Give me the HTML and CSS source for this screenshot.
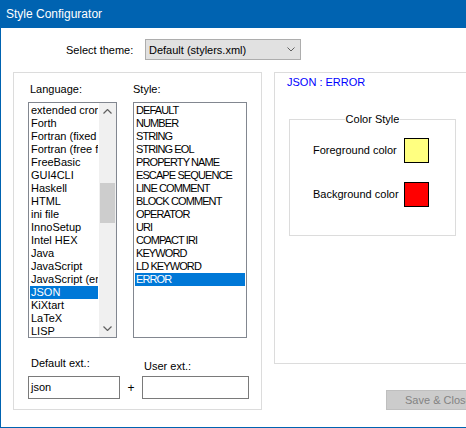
FILE: index.html
```html
<!DOCTYPE html>
<html>
<head>
<meta charset="utf-8">
<link rel="stylesheet" href="styles.css">
</head>
<body>
<div class="window">
  <div class="titlebar">Style Configurator</div>
  <div class="theme-row">
    <span class="theme-label">Select theme:</span>
    <div class="combo">
      <span>Default (stylers.xml)</span>
      <svg class="combo-arrow" width="8" height="5" viewBox="0 0 8 5"><polyline points="0.5,0.5 4,4 7.5,0.5" fill="none" stroke="#606060" stroke-width="1"/></svg>
    </div>
  </div>
  <div class="main">
    <div class="group-left">
      <div class="lists">
        <div class="col lang-col">
          <div class="lbl lbl-lang">Language:</div>
          <div class="listbox lang">
            <div class="items">
              <div class="item">extended crontab</div>
              <div class="item">Forth</div>
              <div class="item">Fortran (fixed form)</div>
              <div class="item">Fortran (free form)</div>
              <div class="item">FreeBasic</div>
              <div class="item">GUI4CLI</div>
              <div class="item">Haskell</div>
              <div class="item">HTML</div>
              <div class="item">ini file</div>
              <div class="item">InnoSetup</div>
              <div class="item">Intel HEX</div>
              <div class="item">Java</div>
              <div class="item">JavaScript</div>
              <div class="item">JavaScript (embedded)</div>
              <div class="item sel">JSON</div>
              <div class="item">KiXtart</div>
              <div class="item">LaTeX</div>
              <div class="item">LISP</div>
            </div>
            <div class="scrollbar">
              <div class="sb-btn"><svg width="9" height="5" viewBox="0 0 9 5"><polyline points="0.5,4.5 4.5,0.5 8.5,4.5" fill="none" stroke="#606060" stroke-width="1.2"/></svg></div>
              <div class="sb-thumb"></div>
              <div class="sb-btn sb-down"><svg width="9" height="5" viewBox="0 0 9 5"><polyline points="0.5,0.5 4.5,4.5 8.5,0.5" fill="none" stroke="#606060" stroke-width="1.2"/></svg></div>
            </div>
          </div>
        </div>
        <div class="col style-col">
          <div class="lbl">Style:</div>
          <div class="listbox stylelist">
            <div class="items">
              <div class="item">DEFAULT</div>
              <div class="item">NUMBER</div>
              <div class="item">STRING</div>
              <div class="item">STRING EOL</div>
              <div class="item">PROPERTY NAME</div>
              <div class="item">ESCAPE SEQUENCE</div>
              <div class="item">LINE COMMENT</div>
              <div class="item">BLOCK COMMENT</div>
              <div class="item">OPERATOR</div>
              <div class="item">URI</div>
              <div class="item">COMPACT IRI</div>
              <div class="item">KEYWORD</div>
              <div class="item">LD KEYWORD</div>
              <div class="item sel">ERROR</div>
            </div>
          </div>
        </div>
      </div>
      <div class="ext-row">
        <div class="ext-col ext-default">
          <div class="ext-lbl lbl-default">Default ext.:</div>
          <div class="textbox">json</div>
        </div>
        <div class="plus">+</div>
        <div class="ext-col ext-user">
          <div class="ext-lbl lbl-user">User ext.:</div>
          <div class="textbox"></div>
        </div>
      </div>
    </div>
    <div class="right-col">
      <div class="panel">
        <div class="cur">JSON : ERROR</div>
        <fieldset class="colorstyle">
          <legend>Color Style</legend>
          <div class="color-grid">
            <span class="clabel">Foreground color</span>
            <div class="swatch fg"></div>
            <span class="clabel">Background color</span>
            <div class="swatch bg"></div>
          </div>
        </fieldset>
      </div>
      <button class="save">Save &amp; Close</button>
    </div>
  </div>
</div>
</body>
</html>
```
FILE: styles.css
```css
html, body {
  margin: 0;
  padding: 0;
}
body {
  width: 466px;
  height: 428px;
  overflow: hidden;
  background: #ffffff;
  font-family: "Liberation Sans", Arial, sans-serif;
  font-size: 11px;
  color: #000000;
}
.window {
  width: 560px;
  height: 428px;
  box-sizing: border-box;
  border-left: 1px solid #0063b1;
  border-bottom: 1px solid #0063b1;
  background: #ffffff;
}
.titlebar {
  height: 28px;
  line-height: 28px;
  background: #0063b1;
  color: #ffffff;
  font-size: 12px;
  padding-left: 5px;
  margin-left: -1px;
  padding-left: 6px;
}
.theme-row {
  display: flex;
  align-items: center;
  margin-top: 11px;
  padding-left: 65px;
  height: 21px;
}
.theme-label {
  width: 79px;
  flex: none;
}
.combo {
  width: 156px;
  height: 21px;
  box-sizing: border-box;
  border: 1px solid #adadad;
  background: #e1e1e1;
  display: flex;
  align-items: center;
  justify-content: space-between;
  padding: 0 5px 0 3px;
}
.combo-arrow {
  display: block;
}
.main {
  display: flex;
  align-items: flex-start;
  margin-top: 12px;
  padding-left: 12px;
}
.group-left {
  width: 249px;
  height: 338px;
  box-sizing: border-box;
  border: 1px solid #dcdcdc;
  padding: 10px 0 0 14px;
  flex: none;
}
.lists {
  display: flex;
  gap: 16px;
}
.lbl {
  line-height: 13px;
  height: 13px;
  margin-bottom: 6px;
}
.lbl-lang {
  padding-left: 2px;
}
.listbox {
  height: 236px;
  box-sizing: border-box;
  border: 1px solid #828790;
  background: #ffffff;
  overflow: hidden;
  display: flex;
}
.listbox .items {
  padding: 1px;
  overflow: hidden;
  flex: 1;
  min-width: 0;
}
.item {
  height: 13px;
  line-height: 13px;
  padding-left: 1px;
  white-space: nowrap;
  overflow: hidden;
}
.item.sel {
  background: #0078d7;
  color: #ffffff;
}
.lang {
  width: 89px;
}
.stylelist {
  width: 114px;
}
.stylelist .item {
  letter-spacing: -0.9px;
}
.scrollbar {
  width: 17px;
  flex: none;
  background: #f0f0f0;
  display: flex;
  flex-direction: column;
}
.sb-btn {
  height: 17px;
  display: flex;
  align-items: center;
  justify-content: center;
  flex: none;
}
.sb-btn svg {
  display: block;
}
.sb-thumb {
  margin: 63px 1px 0 1px;
  height: 40px;
  background: #cdcdcd;
  flex: none;
}
.sb-down {
  margin-top: auto;
}
.ext-row {
  display: flex;
  align-items: flex-end;
  margin-top: 19px;
}
.ext-col {
  display: flex;
  flex-direction: column;
}
.ext-default {
  width: 92px;
}
.ext-user {
  width: 107px;
}
.ext-lbl {
  line-height: 13px;
  height: 13px;
}
.lbl-default {
  padding-left: 3px;
  margin-bottom: 6px;
}
.lbl-user {
  padding-left: 2px;
  margin-bottom: 3px;
}
.textbox {
  height: 23px;
  box-sizing: border-box;
  border: 1px solid #7a7a7a;
  background: #ffffff;
  line-height: 20px;
  padding-left: 2px;
}
.plus {
  width: 22px;
  height: 23px;
  line-height: 24px;
  text-align: center;
  font-size: 12px;
}
.right-col {
  margin-left: 12px;
  display: flex;
  flex-direction: column;
  flex: none;
}
.panel {
  width: 240px;
  height: 292px;
  box-sizing: border-box;
  border: 1px solid #dcdcdc;
  padding: 3px 0 0 12px;
}
.cur {
  color: #0000ff;
  line-height: 13px;
  height: 13px;
}
.colorstyle {
  margin: 24px 0 0 2px;
  width: 167px;
  height: 123px;
  box-sizing: border-box;
  border: 1px solid #dcdcdc;
  padding: 0;
  min-width: 0;
}
.colorstyle legend {
  margin: 0 auto;
  padding: 0 1px;
  line-height: 13px;
  font-size: 11px;
}
.color-grid {
  display: grid;
  grid-template-columns: auto 25px;
  column-gap: 5px;
  row-gap: 19px;
  align-items: center;
  justify-content: start;
  padding: 12px 0 0 23px;
}
.clabel {
  line-height: 13px;
}
.swatch {
  width: 25px;
  height: 25px;
  box-sizing: border-box;
  border: 1px solid #000000;
}
.swatch.fg {
  background: #ffff80;
}
.swatch.bg {
  background: #ff0000;
}
.save {
  margin: 26px 0 0 112px;
  width: 100px;
  height: 20px;
  box-sizing: border-box;
  border: 1px solid #bfbfbf;
  background: #cccccc;
  color: #838383;
  font-family: "Liberation Sans", Arial, sans-serif;
  font-size: 11px;
  text-align: left;
  padding: 0 0 0 18px;
  line-height: 18px;
}
```
